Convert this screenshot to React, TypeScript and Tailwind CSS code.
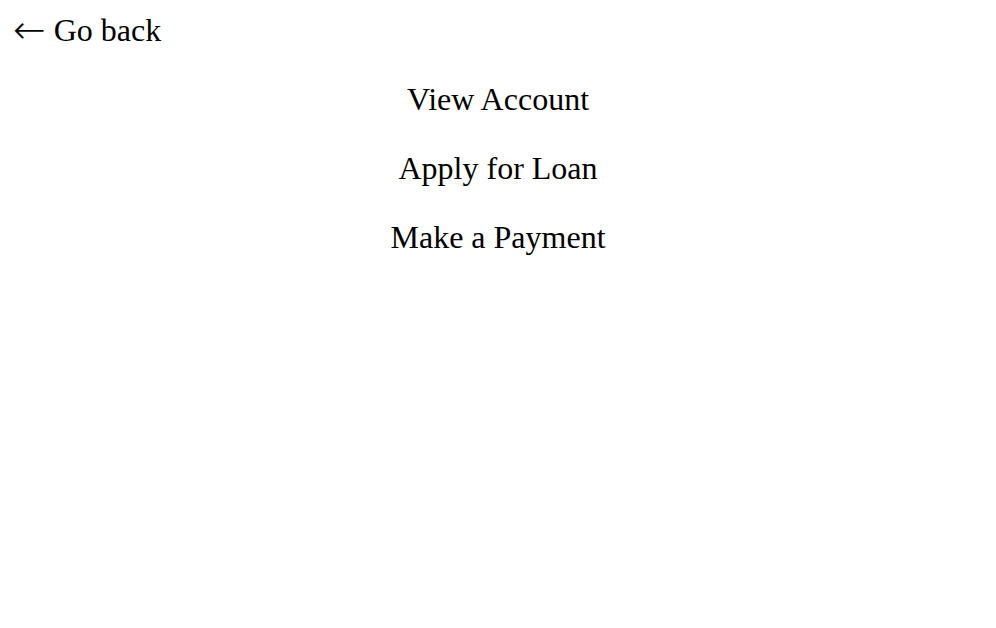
import React from "react";

const links = ["View Account", "Apply for Loan", "Make a Payment"];

export default function App() {
  return (
    <div className="min-h-screen bg-white text-black font-['Liberation_Serif',serif] text-[32px] leading-[37px]">
      <div className="pt-3 pl-[13px]">
        <a className="cursor-pointer">
          <span className="font-['DejaVu_Sans',sans-serif] text-[39px] leading-[0px] font-light align-[-2px]">←</span> Go back
        </a>
      </div>
      <div className="flex flex-col items-center mt-8 gap-8">
        {links.map((label) => (
          <p key={label} className="text-center">
            {label}
          </p>
        ))}
      </div>
    </div>
  );
}
